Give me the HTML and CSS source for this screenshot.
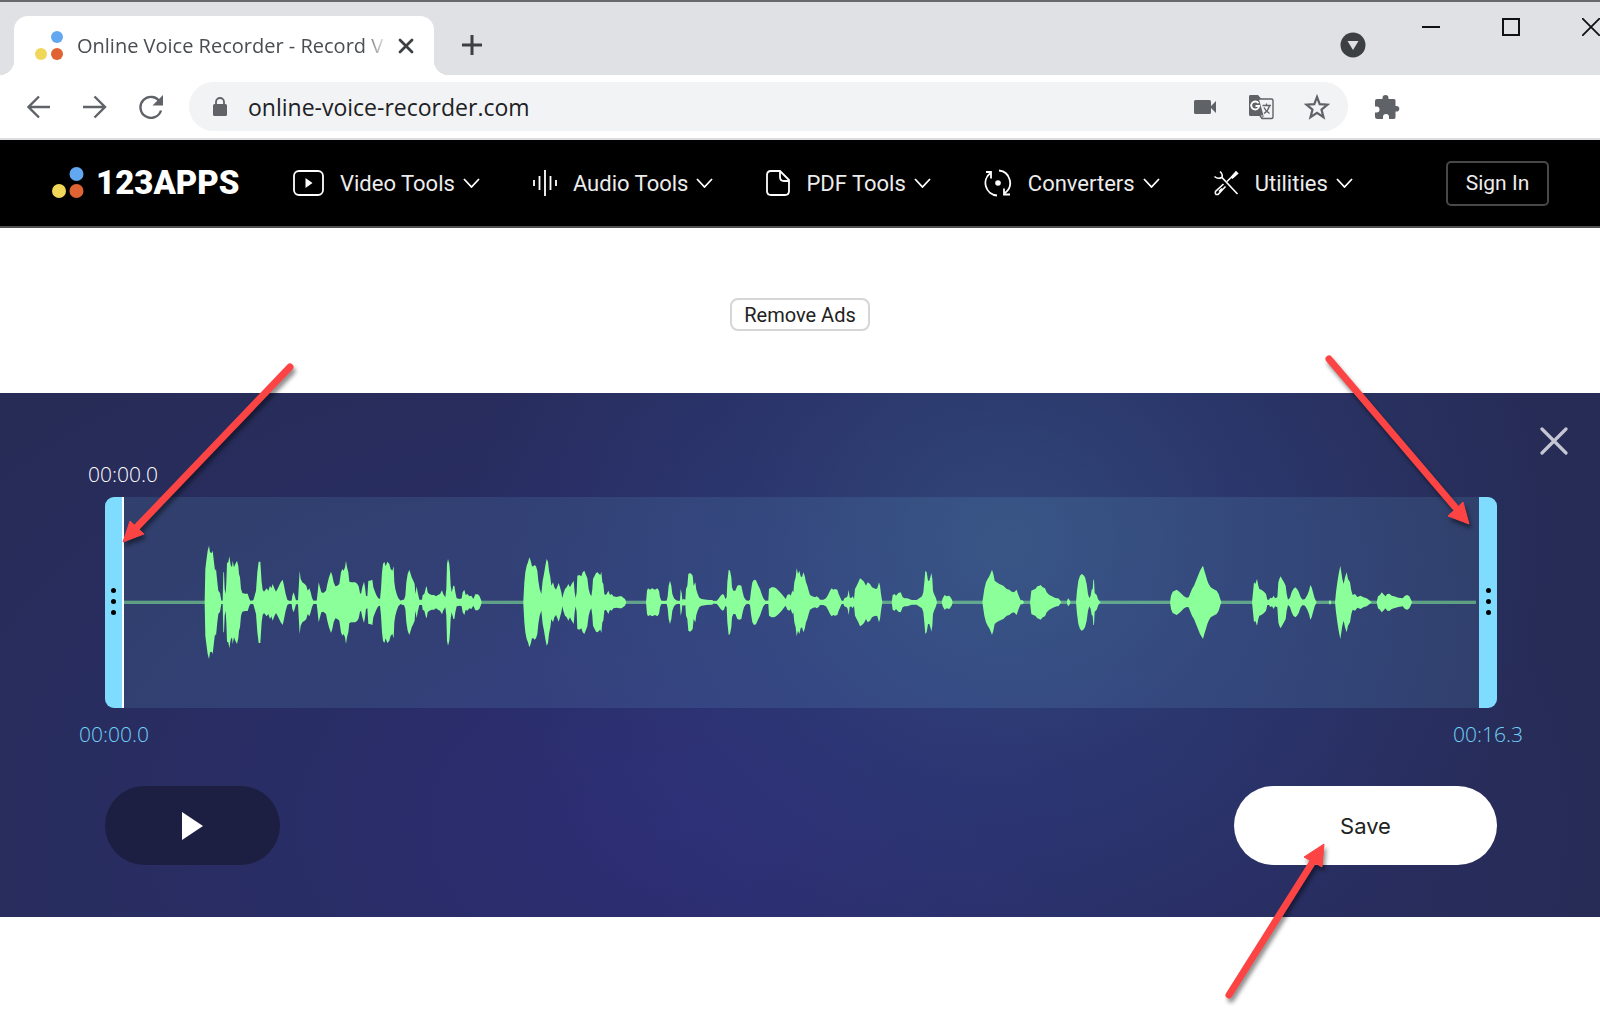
FILE: index.html
```html
<!DOCTYPE html>
<html lang="en">
<head>
    <meta charset="UTF-8">
    <meta name="viewport" content="width=device-width, initial-scale=1.0">
    <title>Online Voice Recorder - Record Voice from the Microphone</title>
    <link rel="stylesheet" href="styles.css">
</head>
<body>
    <div class="tab-strip">
        <div class="tab">
            <svg class="favicon" viewBox="0 0 28 30">
                <circle cx="22" cy="6" r="6" fill="#62a8f0"/>
                <circle cx="6" cy="23" r="6" fill="#f0d75a"/>
                <circle cx="22" cy="23" r="6" fill="#e06334"/>
            </svg>
            <span class="tab-title">Online Voice Recorder - Record V</span>
            <button class="icon-button" aria-label="Close tab">
                <svg width="16" height="16" viewBox="0 0 16 16"><path d="M2 2l12 12M14 2L2 14" stroke="#3c4043" stroke-width="2.800" stroke-linecap="round"/></svg>
            </button>
        </div>
        <button class="icon-button new-tab" aria-label="New tab">
            <svg width="22" height="22" viewBox="0 0 22 22"><path d="M11 1v20M1 11h20" stroke="#3c4043" stroke-width="3"/></svg>
        </button>
        <button class="icon-button tab-search" aria-label="Search tabs">
            <svg width="26" height="26" viewBox="0 0 26 26"><circle cx="13" cy="13" r="12.5" fill="#3c4043"/><path d="M7.500 9h11l-5.500 9z" fill="#dfe1e5"/></svg>
        </button>
        <div class="window-controls">
            <button class="icon-button" aria-label="Minimize">
                <svg width="18" height="18" viewBox="0 0 18 18"><path d="M0 9h18" stroke="#111" stroke-width="2"/></svg>
            </button>
            <button class="icon-button" aria-label="Maximize">
                <svg width="18" height="18" viewBox="0 0 18 18"><path d="M1 1h16v16H1z" fill="none" stroke="#111" stroke-width="2"/></svg>
            </button>
            <button class="icon-button" aria-label="Close window">
                <svg width="18" height="18" viewBox="0 0 18 18"><path d="M0 0l18 18M18 0L0 18" stroke="#111" stroke-width="1.800"/></svg>
            </button>
        </div>
    </div>

    <div class="toolbar">
        <button class="icon-button" aria-label="Back">
            <svg width="24" height="24" viewBox="0 0 24 24" fill="none" stroke="#5f6368" stroke-width="2.400"><path d="M23 12H1.500M12 1.500L1.500 12 12 22.500"/></svg>
        </button>
        <button class="icon-button" aria-label="Forward">
            <svg width="24" height="24" viewBox="0 0 24 24" fill="none" stroke="#5f6368" stroke-width="2.400"><path d="M0 12h22M11.500 1.500L22 12 11.500 22.500"/></svg>
        </button>
        <button class="icon-button" aria-label="Reload">
            <svg width="24" height="24" viewBox="0 0 24 24"><path d="M21 7A10.500 10.500 0 1 0 22 15.500" fill="none" stroke="#5f6368" stroke-width="2.400"/><path d="M24 0v10.500H13.500z" fill="#5f6368"/></svg>
        </button>
        <div class="address-bar">
            <svg width="16" height="20" viewBox="0 0 16 20"><rect x="1" y="7" width="14" height="12" rx="1.500" fill="#5f6368"/><path d="M4 8V5a4 4 0 0 1 8 0v3" fill="none" stroke="#5f6368" stroke-width="1.800"/></svg>
            <input class="url" type="text" value="online-voice-recorder.com" aria-label="Address">
            <button class="icon-button" aria-label="Camera">
                <svg width="26" height="26" viewBox="0 0 26 26"><path d="M3.500 6h14q1.500 0 1.500 1.500V12l5-5v12l-5-5v4.500q0 1.500-1.500 1.500h-14Q2 20 2 18.500v-11Q2 6 3.500 6z" fill="#5f6368"/></svg>
            </button>
            <button class="icon-button" aria-label="Translate">
                <svg width="26" height="26" viewBox="0 0 26 26">
                    <path d="M2 1h8l3 3.500 1 17.500H2.500Q1 22 1 20.500V2.500Q1 1 2 1z" fill="#5f6368"/>
                    <path d="M11 5h12.500Q25 5 25 6.500v16.500q0 1.500-1.500 1.500H14l-2.500-3.500" fill="#f1f3f4" stroke="#5f6368" stroke-width="1.400"/>
                    <path d="M10 2l5.500 19.500H3V2z" fill="#5f6368"/>
                    <path d="M14.500 22l-1 2.500 3-3z" fill="#5f6368"/>
                    <path d="M10.500 9.200A4 4 0 1 0 11.200 12H7.500" fill="none" stroke="#fff" stroke-width="1.800"/>
                    <path d="M14.500 11.500H23M18.500 9.500v2M21.500 11.500q-1 5-5.500 8M16 13.500q1.500 3.500 5.500 6" fill="none" stroke="#5f6368" stroke-width="1.300"/>
                </svg>
            </button>
            <button class="icon-button" aria-label="Bookmark this page">
                <svg width="26" height="26" viewBox="0 0 26 26"><path d="M13 3l2.700 7.200 7.800.5-6 4.900 2 7.600-6.500-4.300-6.500 4.300 2-7.600-6-4.900 7.800-.5z" fill="none" stroke="#5f6368" stroke-width="2.200"/></svg>
            </button>
        </div>
        <button class="icon-button extensions" aria-label="Extensions">
            <svg width="26" height="26" viewBox="0 0 26 26"><path d="M3 5h5.500V4a3 3 0 0 1 6 0v1H20q1.500 0 1.500 1.500V12h1a2.800 2.800 0 0 1 0 5.600h-1V23q0 2-1.500 2h-5v-2a3 3 0 0 0-6 0v2H3.500Q1 25 1 23v-4.500h1.500a3 3 0 0 0 0-6H1V7q0-2 2-2z" fill="#5f6368"/></svg>
        </button>
    </div>

    <header class="site-header">
        <a class="logo" href="#">
            <svg width="32" height="32" viewBox="0 0 32 32">
                <circle cx="24.500" cy="7" r="7" fill="#62a8f0"/>
                <circle cx="7" cy="24" r="7" fill="#f0d75a"/>
                <circle cx="24.500" cy="24" r="7" fill="#e06334"/>
            </svg>
            <span class="logo-text">123APPS</span>
        </a>
        <nav class="site-nav">
            <a class="nav-item" href="#">
                <svg width="31" height="26" viewBox="0 0 31 26"><rect x="1" y="1" width="29" height="24" rx="5" fill="none" stroke="#fff" stroke-width="1.800"/><path d="M12.500 8v10l7-5z" fill="#fff"/></svg>
                <span>Video Tools</span>
                <svg class="chevron" viewBox="0 0 17 10"><path d="M1 1l7.500 8L16 1"/></svg>
            </a>
            <a class="nav-item" href="#">
                <svg width="24" height="26" viewBox="0 0 24 26"><path d="M1 10v6M6.500 6v14M12 0v26M17.500 6v14M23 10v6" stroke="#fff" stroke-width="1.800"/></svg>
                <span>Audio Tools</span>
                <svg class="chevron" viewBox="0 0 17 10"><path d="M1 1l7.500 8L16 1"/></svg>
            </a>
            <a class="nav-item" href="#">
                <svg width="24" height="26" viewBox="0 0 24 26"><path d="M14 1H5Q1 1 1 5v16q0 4 4 4h14q4 0 4-4V10zV7q0 4 4 4h5" fill="none" stroke="#fff" stroke-width="1.800" stroke-linejoin="round"/></svg>
                <span>PDF Tools</span>
                <svg class="chevron" viewBox="0 0 17 10"><path d="M1 1l7.500 8L16 1"/></svg>
            </a>
            <a class="nav-item" href="#">
                <svg width="28" height="28" viewBox="0 0 28 28"><path d="M13 26.500A12.500 12.500 0 0 1 6.500 4M2 3h5v6.500M15 1.500A12.500 12.500 0 0 1 21 24M26 25.500h-6v-6" fill="none" stroke="#fff" stroke-width="1.800"/><circle cx="14" cy="14" r="2.800" fill="#fff"/></svg>
                <span>Converters</span>
                <svg class="chevron" viewBox="0 0 17 10"><path d="M1 1l7.500 8L16 1"/></svg>
            </a>
            <a class="nav-item" href="#">
                <svg width="26" height="26" viewBox="0 0 26 26" fill="none" stroke="#fff" stroke-width="1.600"><path d="M7 1.500q3 2.500 2 6L24.500 24M1.500 6.500q3.500 3 7 1"/><path d="M18.500 7l4.500-5 1.500 1.500-5 4.500zL14 11.500" fill="#fff"/><path d="M10.500 14L2.500 21.500q-1 3.500 2.500 3L12.500 16.500M6 21.500l3-3"/></svg>
                <span>Utilities</span>
                <svg class="chevron" viewBox="0 0 17 10"><path d="M1 1l7.500 8L16 1"/></svg>
            </a>
        </nav>
        <button class="sign-in">Sign In</button>
    </header>

    <div class="ads">
        <button class="remove-ads">Remove Ads</button>
    </div>

    <main class="recorder">
        <button class="icon-button close-recorder" aria-label="Close">
            <svg width="28" height="28" viewBox="0 0 28 28"><path d="M2 2l24 24M26 2L2 26" stroke="#c5c6d4" stroke-width="3.200" stroke-linecap="round"/></svg>
        </button>

        <div class="current-time">00:00.0</div>

        <div class="track">
            <div class="handle handle-left">
                <span class="grip"></span><span class="grip"></span><span class="grip"></span>
                <svg class="arrow arrow-left" viewBox="0 0 190 195"><path d="M175 12L22 172" stroke="#fd4444" stroke-width="7" stroke-linecap="round"/><path d="M8 187l7-21 14 13z" fill="#fd4444" stroke="#fd4444"/></svg>
            </div>
            <svg class="wave" id="wave" viewBox="0 0 4065 633" preserveAspectRatio="none">
                <rect class="wave-line" x="0" y="311" width="4056" height="10"/>
            </svg>
            <div class="handle handle-right">
                <span class="grip"></span><span class="grip"></span><span class="grip"></span>
                <svg class="arrow arrow-right" viewBox="0 0 165 190"><path d="M14 14L140 162" stroke="#fd4444" stroke-width="7" stroke-linecap="round"/><path d="M154 179l-6-22-15 14z" fill="#fd4444" stroke="#fd4444"/></svg>
            </div>
        </div>

        <div class="range-times">
            <span>00:00.0</span>
            <span>00:16.3</span>
        </div>

        <div class="controls">
            <button class="play" aria-label="Play">
                <svg width="22" height="28" viewBox="0 0 22 28"><path d="M0 0l21 14L0 28z" fill="#fff"/></svg>
            </button>
            <button class="save">
                Save
                <svg class="arrow arrow-save" viewBox="0 0 115 175"><path d="M9 160L94 25" stroke="#fd4444" stroke-width="7" stroke-linecap="round"/><path d="M104 9L84 22l18 10z" fill="#fd4444" stroke="#fd4444"/></svg>
            </button>
        </div>
    </main>

    <script src="wave.js"></script>
</body>
</html>
```
FILE: styles.css
```css
* {
    box-sizing: border-box;
}

body {
    min-height: 100vh;
    margin: 0;
    font-family: Roboto, "Liberation Sans", sans-serif;
    background: #fff;
}

button {
    font-family: inherit;
    cursor: pointer;
}

svg {
    display: block;
    flex: none;
}

.icon-button {
    display: flex;
    flex: none;
    padding: 0;
    border: none;
    background: none;
}

/* Browser tabs */
.tab-strip {
    display: flex;
    align-items: flex-start;
    height: 75px;
    border-top: 2px solid #69696c;
    background: #dfe1e5;
    overflow: hidden;
}

.tab {
    position: relative;
    display: flex;
    align-items: center;
    width: 420px;
    height: 59px;
    margin: 14px 0 0 14px;
    padding: 0 20px 0 21px;
    border-radius: 14px 14px 0 0;
    background: #fff;
}

.tab::before,
.tab::after {
    content: "";
    position: absolute;
    bottom: 0;
    width: 14px;
    height: 14px;
}

.tab::before {
    left: -14px;
    background: radial-gradient(circle at 0 0, transparent 14px, #fff 14px);
}

.tab::after {
    right: -14px;
    background: radial-gradient(circle at 100% 0, transparent 14px, #fff 14px);
}

.favicon {
    width: 28px;
    height: 30px;
}

.tab-title {
    flex: 1;
    margin: 0 10px 0 14px;
    white-space: nowrap;
    font-family: "Open Sans", "Noto Sans", sans-serif;
    font-size: 20px;
    color: #4a4d51;
    -webkit-mask-image: linear-gradient(to right, #000 92%, transparent);
    mask-image: linear-gradient(to right, #000 92%, transparent);
}

.new-tab {
    margin: 32px 0 0 27px;
}

.tab-search {
    margin: 30px 56px 0 auto;
}

.window-controls {
    display: flex;
    gap: 62px;
    margin: 16px 0 0;
}

/* Browser toolbar */
.toolbar {
    display: flex;
    align-items: center;
    gap: 32px;
    height: 65px;
    padding: 0 200px 0 27px;
    border-bottom: 2px solid #dcdde0;
}

.address-bar {
    display: flex;
    flex: 1;
    align-items: center;
    gap: 30px;
    height: 49px;
    margin-left: -6px;
    padding: 0 18px 0 23px;
    border-radius: 25px;
    background: #f1f3f4;
}

.url {
    flex: 1;
    min-width: 0;
    margin-left: -10px;
    padding: 0;
    border: none;
    outline: none;
    background: none;
    font-family: "Open Sans", "Noto Sans", sans-serif;
    font-size: 23px;
    color: #202124;
}

.extensions {
    margin-left: -6px;
}

/* Site header */
.site-header {
    display: flex;
    align-items: center;
    height: 88px;
    padding: 0 51px 0 52px;
    border-bottom: 2px solid #505050;
    background: #000;
}

.logo {
    display: flex;
    align-items: center;
    gap: 12px;
    width: 186px;
    color: #fff;
    text-decoration: none;
}

.logo-text {
    font-size: 33px;
    font-weight: 900;
    line-height: 36px;
}

.site-nav {
    display: flex;
    gap: 53px;
    margin-left: 55px;
}

.nav-item {
    display: flex;
    align-items: center;
    color: #ececec;
    font-size: 22px;
    white-space: nowrap;
    text-decoration: none;
}

.nav-item span {
    margin: 0 8px 0 16px;
}

.chevron {
    width: 17px;
    height: 10px;
    fill: none;
    stroke: #fff;
    stroke-width: 1.8;
}

.sign-in {
    width: 103px;
    height: 45px;
    margin-left: auto;
    padding: 0;
    border: 2px solid #484848;
    border-radius: 5px;
    background: #000;
    color: #ececec;
    font-size: 21px;
}

/* Ads block */
.ads {
    display: flex;
    justify-content: center;
    padding: 70px 0 62px;
}

.remove-ads {
    height: 33px;
    padding: 0 12px;
    border: 2px solid #d6d6d6;
    border-radius: 8px;
    background: #fff;
    color: #222;
    font-size: 20px;
}

/* Recorder */
.recorder {
    position: relative;
    padding: 66px 103px 52px 105px;
    background:
        radial-gradient(ellipse 540px 500px at 63% 28%, rgba(52, 78, 128, 0.75), rgba(46, 66, 128, 0.4) 50%, transparent),
        radial-gradient(ellipse 900px 560px at 43% 82%, #2e2d76, rgba(43, 46, 116, 0.5) 45%, transparent),
        #272c57;
}

.close-recorder {
    position: absolute;
    top: 34px;
    right: 32px;
}

.current-time,
.range-times {
    font-family: "Open Sans", "Noto Sans", sans-serif;
    font-size: 21px;
    font-weight: 300;
    line-height: 30px;
}

.current-time {
    margin: 0 -17px 8px;
    color: #fff;
}

.track {
    display: flex;
    height: 211px;
    border-radius: 10px;
    background: rgba(127, 221, 255, 0.11);
}

.handle {
    position: relative;
    display: flex;
    flex: none;
    flex-direction: column;
    align-items: center;
    justify-content: center;
    gap: 6px;
    width: 18px;
    padding-bottom: 3px;
    background: #7fdcff;
}

.handle-left {
    width: 19px;
    border-right: 2px solid #fff;
    border-radius: 9px 0 0 9px;
}

.handle-right {
    border-radius: 0 9px 9px 0;
}

.grip {
    width: 5px;
    height: 5px;
    border-radius: 50%;
    background: #000;
}

.wave {
    flex: 1;
    min-width: 0;
    height: 100%;
}

.wave-line {
    fill: rgba(139, 255, 153, 0.5);
}

.wave-shape {
    fill: #8bff99;
}

.range-times {
    display: flex;
    justify-content: space-between;
    margin: 11px -26px 37px;
    color: #70d2f8;
}

.controls {
    display: flex;
    justify-content: space-between;
}

.play,
.save {
    display: flex;
    align-items: center;
    justify-content: center;
    height: 79px;
    padding: 0;
    border: none;
    border-radius: 40px;
}

.play {
    width: 175px;
    background: #1c1f41;
}

.save {
    position: relative;
    width: 263px;
    background: #fff;
    color: #222;
    font-family: Inter, "Liberation Sans", sans-serif;
    font-size: 22px;
}

/* Hint arrows */
.arrow {
    position: absolute;
    z-index: 1;
    fill: none;
    filter: drop-shadow(2px 4px 2px rgba(0, 0, 0, 0.45));
    pointer-events: none;
}

.arrow-left {
    top: -142px;
    left: 10px;
    width: 190px;
    height: 195px;
}

.arrow-right {
    top: -152px;
    right: 17px;
    width: 165px;
    height: 190px;
}

.arrow-save {
    top: 49px;
    left: -14px;
    width: 115px;
    height: 175px;
}
```
FILE: wave.js
```js
const wave = document.getElementById('wave');
const middle = 316;

// Each phrase: start position, then pairs of offset and peak height
const phrases = [
    { start: 168, peaks: [
        74,4, 76,100, 79,125, 83,155, 87,170, 90,150, 95,148, 98,155, 102,120, 105,95, 108,100, 112,60, 115,35, 120,28, 124,5,
        128,5, 130,90, 132,90, 134,40, 137,25, 139,60, 141,118, 145,120, 148,138, 152,112, 156,105, 158,125, 162,105, 166,115,
        171,125, 175,108, 177,85, 180,75, 183,40, 187,28, 195,26, 203,26, 208,10, 212,4, 220,6, 224,20, 228,35, 232,90, 236,122,
        241,122, 243,90, 245,60, 248,38, 252,32, 260,42, 265,35, 270,50, 274,42, 278,55, 283,42, 288,32, 295,45, 302,60, 308,68,
        311,55, 314,40, 317,25, 322,8, 328,4, 335,5, 337,20, 341,30, 344,20, 348,6, 354,6, 357,60, 359,95, 362,70, 367,60,
        374,55, 379,50, 383,35, 388,42, 392,30, 396,14, 400,5, 410,5, 413,30, 416,60, 420,45, 424,30, 430,28, 438,35, 442,55,
        447,75, 453,92, 457,80, 461,60, 466,48, 472,50, 478,55, 483,90, 487,100, 491,95, 495,105, 498,125, 501,105, 505,90,
        508,62, 514,60, 520,60, 526,60, 532,55, 536,48, 540,28, 543,25, 547,45, 552,62, 555,45, 558,20, 562,18, 565,65, 570,65,
        577,68, 580,45, 585,32, 590,20, 595,12, 600,10, 603,40, 606,90, 609,115, 613,122, 617,108, 622,122, 628,115, 632,100,
        637,95, 641,108, 643,60, 646,40, 650,25, 655,12, 662,5, 668,8, 672,8, 676,20, 679,60, 683,85, 688,98, 692,85, 695,75,
        700,65, 704,55, 706,25, 710,48, 713,30, 718,8, 726,8, 728,22, 733,25, 738,45, 740,48, 743,30, 748,25, 755,22, 762,22,
        768,18, 774,22, 780,25, 786,36, 790,24, 796,15, 799,40, 801,115, 804,130, 808,115, 810,90, 812,50, 815,30, 820,50,
        823,50, 826,30, 830,12, 840,10, 845,12, 848,30, 853,38, 857,22, 862,25, 868,18, 874,20, 880,10, 886,24, 893,24,
        898,20, 903,8, 905,0
    ] },
    { start: 1128, peaks: [
        70,5, 73,60, 76,90, 80,110, 84,120, 88,135, 92,125, 96,108, 100,108, 104,112, 108,108, 112,95, 115,65, 119,40, 124,25,
        128,65, 132,85, 136,110, 140,130, 144,122, 147,95, 151,75, 154,50, 159,60, 163,45, 168,38, 173,50, 176,58, 180,45,
        184,30, 187,12, 190,25, 195,40, 200,45, 205,55, 210,45, 215,55, 221,65, 224,30, 227,12, 230,30, 232,80, 238,82,
        244,78, 248,90, 253,95, 258,82, 262,72, 266,40, 270,25, 274,18, 277,40, 279,70, 284,80, 288,88, 293,90, 297,85,
        301,82, 304,92, 307,60, 310,55, 313,25, 316,22, 320,25, 325,35, 330,22, 335,25, 340,18, 350,16, 358,18, 365,18,
        370,14, 375,10, 379,0, 438,0, 441,35, 444,42, 450,38, 456,42, 465,38, 472,42, 477,35, 480,15, 484,5, 492,4, 500,5,
        503,18, 506,50, 510,65, 514,50, 517,25, 522,12, 528,6, 535,4, 540,5, 542,40, 545,28, 547,8, 551,10, 556,8, 558,40,
        562,50, 565,85, 570,88, 574,85, 578,80, 581,50, 586,60, 589,38, 593,25, 598,14, 605,10, 620,8, 630,7, 637,7, 640,3,
        650,4, 655,10, 662,20, 668,25, 672,22, 676,10, 680,15, 682,60, 686,98, 690,95, 694,75, 696,45, 700,35, 706,35,
        712,50, 718,52, 724,50, 728,30, 732,15, 738,6, 745,4, 750,8, 753,35, 757,60, 762,68, 768,66, 775,50, 780,40,
        785,25, 790,12, 796,5, 805,5, 807,40, 815,45, 822,45, 828,42, 836,35, 845,25, 853,15, 857,10, 862,22, 868,25,
        872,20, 877,35, 880,30, 883,60, 887,75, 890,102, 894,85, 898,95, 902,78, 906,75, 910,90, 914,80, 918,60, 922,50,
        926,35, 930,22, 937,18, 945,15, 950,18, 956,14, 960,8
    ] },
    { start: 2028, peaks: [
        60,8, 70,8, 78,12, 84,22, 90,35, 95,42, 100,38, 105,40, 112,38, 116,25, 121,14, 125,5, 130,4, 133,12, 140,15, 143,20,
        146,38, 149,15, 153,12, 158,18, 162,10, 165,40, 170,50, 175,60, 180,72, 186,68, 192,62, 198,50, 203,60, 210,55,
        216,45, 222,42, 228,40, 232,42, 237,60, 240,50, 243,25, 247,0, 275,0, 278,22, 284,25, 288,20, 295,28, 302,30,
        308,15, 314,12, 322,12, 335,7, 350,7, 360,14, 366,18, 370,30, 373,60, 376,95, 380,90, 384,65, 388,65, 391,75,
        394,88, 397,70, 399,35, 402,25, 408,12, 411,0, 425,0, 428,12, 434,22, 440,18, 448,20, 455,10, 458,0, 547,0,
        550,20, 553,40, 558,60, 563,70, 568,78, 573,90, 576,98, 580,85, 584,65, 590,60, 598,55, 610,50, 620,40, 628,38,
        635,32, 642,30, 650,38, 654,25, 658,15, 662,6, 668,6, 672,0, 690,0, 694,35, 700,38, 706,40, 712,48, 718,50,
        722,52, 728,45, 735,42, 740,30, 748,22, 756,18, 764,14, 770,12, 775,12, 780,6, 784,0, 800,0, 804,12, 808,8,
        812,0, 828,0, 831,35, 835,65, 840,80, 845,85, 850,82, 855,75, 860,55, 864,25, 868,12, 872,20, 875,38, 878,40,
        880,68, 882,68, 884,28, 890,22, 895,8, 902,0
    ] },
    { start: 2988, peaks: [
        150,0, 153,20, 158,32, 164,35, 170,38, 178,32, 185,25, 192,18, 200,14, 206,15, 210,25, 216,40, 222,50, 228,65,
        234,80, 240,95, 246,105, 249,110, 253,95, 257,82, 262,65, 266,55, 272,45, 280,40, 290,35, 296,25, 300,12, 304,0,
        396,0, 399,30, 402,60, 406,55, 411,70, 415,50, 418,40, 424,38, 432,32, 438,25, 442,8, 447,8, 451,14, 456,12,
        461,20, 465,12, 472,15, 475,60, 478,70, 482,78, 486,70, 492,60, 497,50, 500,25, 504,8, 510,14, 515,30, 520,40,
        526,45, 531,40, 536,32, 542,15, 548,8, 555,10, 562,22, 567,35, 571,52, 575,45, 579,30, 584,12, 590,0, 626,0,
        630,8, 634,0, 645,0, 648,30, 652,60, 656,85, 661,110, 664,90, 667,70, 671,55, 675,75, 680,90, 684,70, 690,60,
        694,35, 698,22, 705,25, 712,16, 722,20, 730,15, 740,12, 748,6, 755,0, 770,0, 774,18, 780,22, 785,30, 790,25,
        796,18, 802,25, 808,26, 815,20, 822,18, 835,14, 848,12, 855,20, 862,22, 868,18, 873,8, 876,0
    ] }
];

phrases.forEach(({ start, peaks }) => {
    const top = [];
    const bottom = [];
    for (let i = 0; i < peaks.length; i += 2) {
        const x = start + peaks[i];
        top.push(`${x},${middle - peaks[i + 1]}`);
        bottom.unshift(`${x},${middle + peaks[i + 1]}`);
    }
    const shape = document.createElementNS('http://www.w3.org/2000/svg', 'polygon');
    shape.setAttribute('class', 'wave-shape');
    shape.setAttribute('points', top.concat(bottom).join(' '));
    wave.appendChild(shape);
});
```
